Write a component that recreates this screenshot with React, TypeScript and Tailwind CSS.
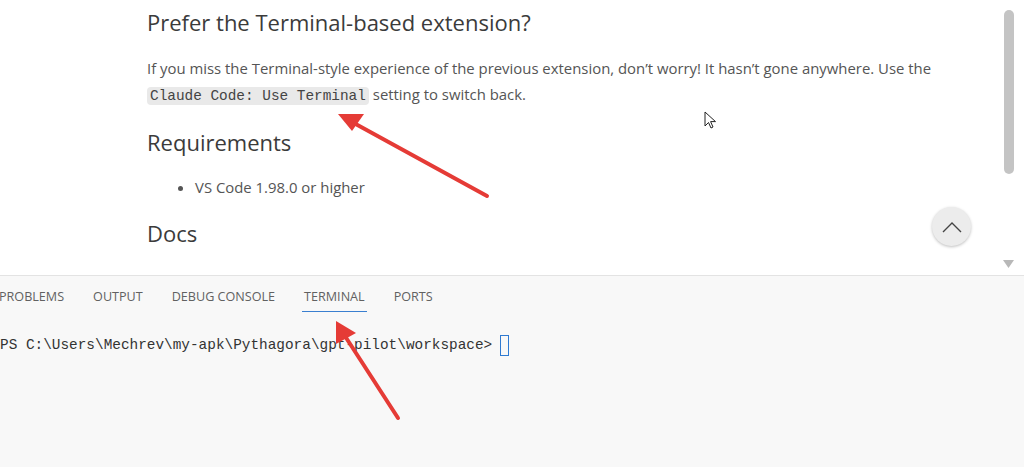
import React from "react";

const sans = { fontFamily: '"Open Sans", "Noto Sans", sans-serif' };
const mono = { fontFamily: '"Liberation Mono", "DejaVu Sans Mono", monospace' };

function Tab({ label, active }: { label: string; active?: boolean }) {
  return (
    <div className="relative px-[2px] pb-[5px]">
      <span className="text-[12.6px] text-[#616161]">{label}</span>
      {active && <div className="absolute left-0 right-0 bottom-0 h-[1px] bg-[#3a7fd0]" />}
    </div>
  );
}

function Arrows() {
  return (
    <svg className="absolute inset-0 pointer-events-none" width="1024" height="467">
      <g stroke="#e53b36" strokeWidth="4" strokeLinecap="round" fill="#e53b36">
        <line x1="487" y1="196" x2="352" y2="122" />
        <polygon points="338,114 364,114 352,131" stroke="none" />
        <line x1="398" y1="418" x2="343" y2="333" />
        <polygon points="336,321 336,344 356,333" stroke="none" />
      </g>
    </svg>
  );
}

export default function App() {
  return (
    <div className="relative w-[1024px] h-[467px] overflow-hidden bg-white" style={sans}>
      <div className="relative h-[276px] overflow-hidden border-b border-[#e3e3e3]">
        <div className="pl-[147px] pr-[80px] text-[#3b3b3b]">
          <h1 className="mt-[7px] text-[22px] leading-[30px] font-normal">
            Prefer the Terminal-based extension?
          </h1>
          <p className="mt-[18px] text-[14.9px] leading-[26px] text-[#555]">
            If you miss the Terminal-style experience of the previous extension, don’t worry! It
            hasn’t gone anywhere. Use the{" "}
            <code className="rounded-[4px] bg-[#e9e9e9] px-[3px] py-[1px] text-[14.4px] text-[#444]" style={mono}>
              Claude Code: Use Terminal
            </code>{" "}
            setting to switch back.
          </p>
          <h2 className="mt-[18px] text-[22px] leading-[30px]">Requirements</h2>
          <ul className="mt-[17px] list-disc pl-[48px] text-[14.9px] leading-[26px] text-[#555]">
            <li>VS Code 1.98.0 or higher</li>
          </ul>
          <h2 className="mt-[18px] text-[22px] leading-[30px]">Docs</h2>
        </div>

        {/* scrollbar */}
        <div className="absolute right-[10px] top-[10px] w-[10px] h-[164px] rounded-full bg-[#c4c4c4]" />
        <svg className="absolute right-[10px] top-[260px]" width="11" height="9" viewBox="0 0 11 9">
          <polygon points="0,0 11,0 5.5,8" fill="#b8b8b8" />
        </svg>

        {/* back to top */}
        <div className="absolute left-[932px] top-[207px] w-[39px] h-[39px] rounded-full bg-[#ececec] shadow-[0_1px_3px_rgba(0,0,0,0.25)] flex items-center justify-center">
          <svg width="20" height="12" viewBox="0 0 20 12">
            <polyline points="1,11 10,2 19,11" fill="none" stroke="#444" strokeWidth="1.4" />
          </svg>
        </div>

        {/* mouse pointer */}
        <svg className="absolute left-[704px] top-[111px]" width="14" height="20" viewBox="0 0 14 20">
          <path d="M1 1 L1 15 L4.5 11.5 L7 17 L9 16 L6.6 10.6 L11.5 10.6 Z" fill="#fff" stroke="#222" strokeWidth="1" strokeLinejoin="round" />
        </svg>
      </div>

      <div className="h-[191px] bg-[#f8f8f8]">
        <div className="flex gap-[25px] pt-[7px] ml-[-3px]">
          <Tab label="PROBLEMS" />
          <Tab label="OUTPUT" />
          <Tab label="DEBUG CONSOLE" />
          <Tab label="TERMINAL" active />
          <Tab label="PORTS" />
        </div>
        <div className="mt-[21px] flex items-center text-[14.4px] leading-[24px] text-[#333]" style={mono}>
          <span>PS C:\Users\Mechrev\my-apk\Pythagora\gpt-pilot\workspace&gt;</span>
          <span className="ml-[8px] inline-block w-[9px] h-[21px] border border-[#2f7ad1]" />
        </div>
      </div>

      <Arrows />
    </div>
  );
}
